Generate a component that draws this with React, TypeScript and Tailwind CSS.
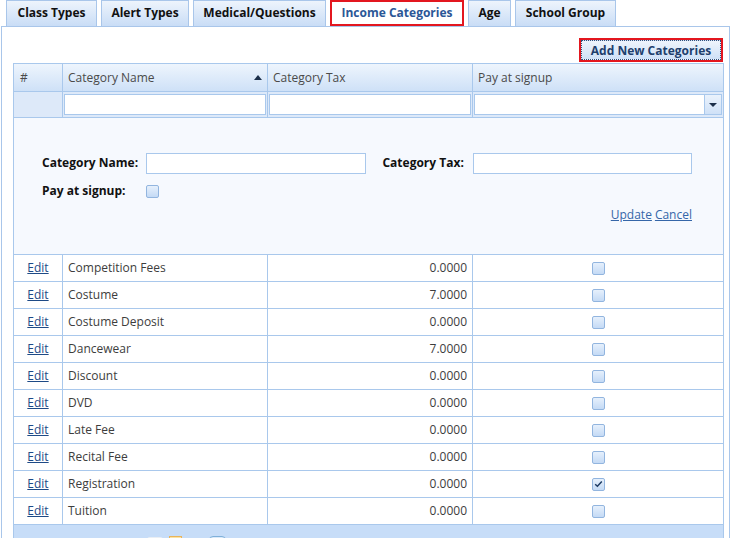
const rows = [
  { name: 'Competition Fees', tax: '0.0000', pay: false },
  { name: 'Costume', tax: '7.0000', pay: false },
  { name: 'Costume Deposit', tax: '0.0000', pay: false },
  { name: 'Dancewear', tax: '7.0000', pay: false },
  { name: 'Discount', tax: '0.0000', pay: false },
  { name: 'DVD', tax: '0.0000', pay: false },
  { name: 'Late Fee', tax: '0.0000', pay: false },
  { name: 'Recital Fee', tax: '0.0000', pay: false },
  { name: 'Registration', tax: '0.0000', pay: true },
  { name: 'Tuition', tax: '0.0000', pay: false },
];

const tabs = [
  { label: 'Class Types', w: 'w-[91px]' },
  { label: 'Alert Types', w: 'w-[88px]' },
  { label: 'Medical/Questions', w: 'w-[133px]' },
  { label: 'Income Categories', w: 'w-[134px]', active: true },
  { label: 'Age', w: 'w-[43px]' },
  { label: 'School Group', w: 'w-[101px]' },
];

const cols = 'grid grid-cols-[49px_205px_205px_251px]';
const cell = 'border-r border-b border-[#a9c8ec]';

const Check = ({ checked }: { checked?: boolean }) => (
  <span className="flex h-[13px] w-[13px] items-center justify-center rounded-[2px] border border-[#92b5df] bg-gradient-to-b from-[#e6f0fc] to-[#c4daf5]">
    {checked && (
      <svg width="9" height="8" viewBox="0 0 9 8">
        <path d="M1.2 4.2 L3.4 6.2 L7.8 1.6" fill="none" stroke="#1d3b63" strokeWidth="1.5" />
      </svg>
    )}
  </span>
);

export default function App() {
  return (
    <div className="h-[538px] w-[736px] overflow-hidden bg-white font-['Open_Sans',sans-serif] text-[12px]">
      <div className="flex h-[26px] gap-[4px] pl-[6px]">
        {tabs.map((t) =>
          t.active ? (
            <div
              key={t.label}
              className={`${t.w} relative z-10 flex h-[26px] items-center justify-center border-2 border-[#e3171f] bg-white pb-[1px] font-bold text-[#2b5797]`}
            >
              {t.label}
            </div>
          ) : (
            <div
              key={t.label}
              className={`${t.w} flex h-[26px] items-center justify-center border border-b-0 border-[#a9c6ea] bg-gradient-to-b from-[#eef4fc] to-[#c9ddf6] pb-[1px] font-bold text-[#111]`}
            >
              {t.label}
            </div>
          ),
        )}
      </div>

      <div className="ml-[1px] w-[729px] border border-b-0 border-[#a9c6ea] pl-[11px] pt-[11px]">
        <div className="flex w-[711px] justify-end pr-[1px]">
          <div className="border-2 border-[#e3171f]">
            <div className="flex h-[20px] w-[140px] items-center justify-center border border-dotted border-[#33507a] bg-gradient-to-b from-[#eef4fc] to-[#cfe1f7] pt-[1px] font-bold text-[#1f3f6d]">
              Add New Categories
            </div>
          </div>
        </div>

        <div className="mt-[1px] w-[711px] border-l border-t border-[#a9c8ec]">
          {/* header */}
          <div className={`${cols} h-[28px] bg-gradient-to-b from-[#eef5fd] to-[#cde0f7] text-[#4a4a4a]`}>
            <div className={`${cell} flex items-center pl-[6px]`}>#</div>
            <div className={`${cell} flex items-center justify-between pl-[5px] pr-[5px]`}>
              <span>Category Name</span>
              <svg width="8" height="5" viewBox="0 0 8 5">
                <path d="M0 5 L4 0 L8 5 Z" fill="#1c2f4a" />
              </svg>
            </div>
            <div className={`${cell} flex items-center pl-[5px]`}>Category Tax</div>
            <div className={`${cell} flex items-center pl-[5px]`}>Pay at signup</div>
          </div>

          {/* filter */}
          <div className={`${cols} h-[26px] bg-[#dde9f9]`}>
            <div className={cell} />
            <div className={`${cell} flex items-center px-[1px]`}>
              <div className="h-[21px] w-full border border-[#a9c8ec] bg-white" />
            </div>
            <div className={`${cell} flex items-center px-[1px]`}>
              <div className="h-[21px] w-full border border-[#a9c8ec] bg-white" />
            </div>
            <div className={`${cell} flex items-center px-[1px]`}>
              <div className="flex h-[21px] w-full justify-end border border-[#a9c8ec] bg-white">
                <div className="flex w-[17px] items-center justify-center border-l border-[#a9c8ec] bg-gradient-to-b from-[#eaf2fc] to-[#cfe1f7]">
                  <svg width="8" height="4" viewBox="0 0 8 4">
                    <path d="M0 0 L8 0 L4 4 Z" fill="#1c2f4a" />
                  </svg>
                </div>
              </div>
            </div>
          </div>

          {/* edit form */}
          <div className="h-[137px] border-r border-b border-[#a9c8ec] bg-[#f6f9fe] pl-[28px] pr-[31px] pt-[35px] font-bold text-[#111]">
            <div className="flex h-[20px] items-center">
              <span className="w-[104px]">Category Name:</span>
              <div className="h-[21px] w-[222px] border border-[#a9c8ec] bg-white" />
              <span className="ml-[16px] w-[91px]">Category Tax:</span>
              <div className="h-[21px] w-[220px] border border-[#a9c8ec] bg-white" />
            </div>
            <div className="mt-[8px] flex h-[20px] items-center">
              <span className="w-[104px]">Pay at signup:</span>
              <Check />
            </div>
            <div className="mt-[5px] flex justify-end gap-[3px] font-normal text-[#3566a8]">
              <span className="underline">Update</span>
              <span className="underline">Cancel</span>
            </div>
          </div>

          {/* rows */}
          {rows.map((r) => (
            <div key={r.name} className={`${cols} h-[27px] text-[#3d3d3d]`}>
              <div className={`${cell} flex items-center justify-center text-[#1e4a86] underline`}>Edit</div>
              <div className={`${cell} flex items-center pl-[5px]`}>{r.name}</div>
              <div className={`${cell} flex items-center justify-end pr-[5px]`}>{r.tax}</div>
              <div className={`${cell} flex items-center justify-center`}>
                <Check checked={r.pay} />
              </div>
            </div>
          ))}

          {/* pager */}
          <div className="relative h-[30px] border-r border-[#a9c8ec] bg-[#c7ddf8]">
            <div className="absolute left-[133px] top-[12px] h-[14px] w-[16px] rounded-[3px] bg-[#e9eef4]" />
            <div className="absolute left-[155px] top-[11px] h-[14px] w-[13px] border border-[#e9b45a] bg-[#fbe3a5]" />
            <div className="absolute left-[195px] top-[11px] h-[14px] w-[17px] rounded-[4px] border border-[#7fb0d9] bg-[#dbeafa]" />
          </div>
        </div>
      </div>
    </div>
  );
}
